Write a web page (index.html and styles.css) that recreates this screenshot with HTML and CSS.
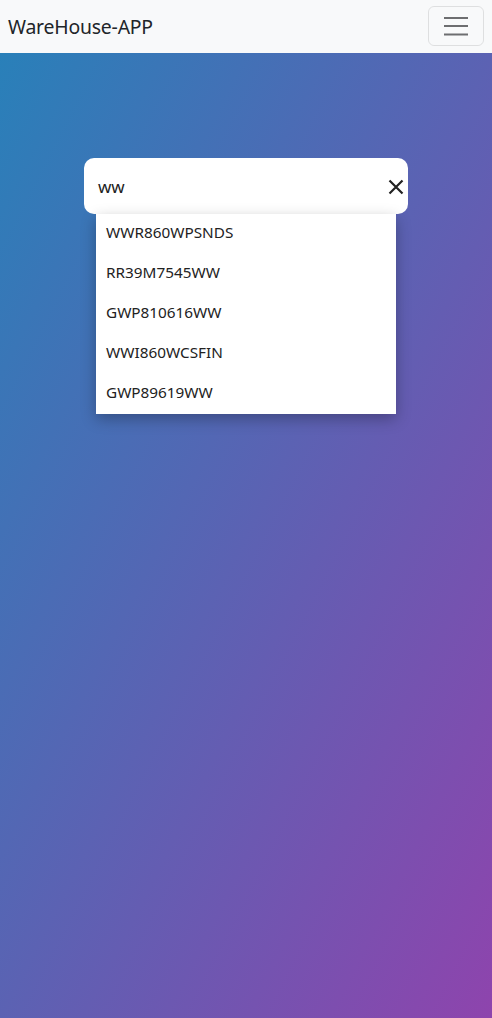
FILE: index.html
```html
<!DOCTYPE html>
<html>
<head>
<meta charset="utf-8">
<link rel="stylesheet" href="styles.css">
</head>
<body>
<nav class="navbar">
  <span class="brand">WareHouse-APP</span>
  <button class="toggler" aria-label="menu">
    <svg width="24" height="20" viewBox="0 0 24 20"><path d="M0 2h24M0 10h24M0 18.5h24" stroke="#6d6e70" stroke-width="2.2" fill="none"/></svg>
  </button>
</nav>
<main class="hero">
  <div class="search">
    <div class="search-box">
      <span class="query">ww</span>
      <svg class="clear" width="16" height="16" viewBox="0 0 16 16"><path d="M1.5 1.5L14.5 14.5M14.5 1.5L1.5 14.5" stroke="#222" stroke-width="2.2" fill="none"/></svg>
    </div>
    <ul class="dropdown">
      <li>WWR860WPSNDS</li>
      <li>RR39M7545WW</li>
      <li>GWP810616WW</li>
      <li>WWI860WCSFIN</li>
      <li>GWP89619WW</li>
    </ul>
  </div>
</main>
</body>
</html>
```
FILE: styles.css
```css
* { box-sizing: border-box; }
html, body { margin: 0; padding: 0; height: 100%; }
body {
  font-family: "Noto Sans", "Open Sans", sans-serif;
  color: #212529;
  display: flex;
  flex-direction: column;
}
.navbar {
  height: 53px;
  background: #f8f9fa;
  display: flex;
  align-items: center;
  justify-content: space-between;
  padding: 0 8px;
  flex: none;
}
.brand {
  font-size: 19.4px;
  color: #212529;
  letter-spacing: -0.2px;
}
.toggler {
  width: 56px;
  height: 40px;
  border: 1px solid rgba(0,0,0,0.1);
  border-radius: 6px;
  background: transparent;
  display: flex;
  align-items: center;
  justify-content: center;
  padding: 0;
  margin-top: -2px;
}
.hero {
  flex: 1;
  background: linear-gradient(to bottom right, #2980b9, #8e44ad);
  padding-top: 105px;
}
.search {
  width: 324px;
  margin-left: 84px;
}
.search-box {
  height: 56px;
  background: #fff;
  border-radius: 10px;
  display: flex;
  align-items: center;
  justify-content: space-between;
  padding: 0 4px 0 14px;
}
.query {
  font-size: 17px;
  color: #222;
  margin-top: 1px;
}
.clear { margin-top: 2px; }
.dropdown {
  list-style: none;
  margin: 0 12px;
  padding: 0;
  background: #fff;
  box-shadow: 0 5px 14px rgba(0,0,0,0.28);
}
.dropdown li {
  height: 40px;
  line-height: 36px;
  padding-left: 10px;
  font-size: 15.3px;
  color: #222;
}
```
